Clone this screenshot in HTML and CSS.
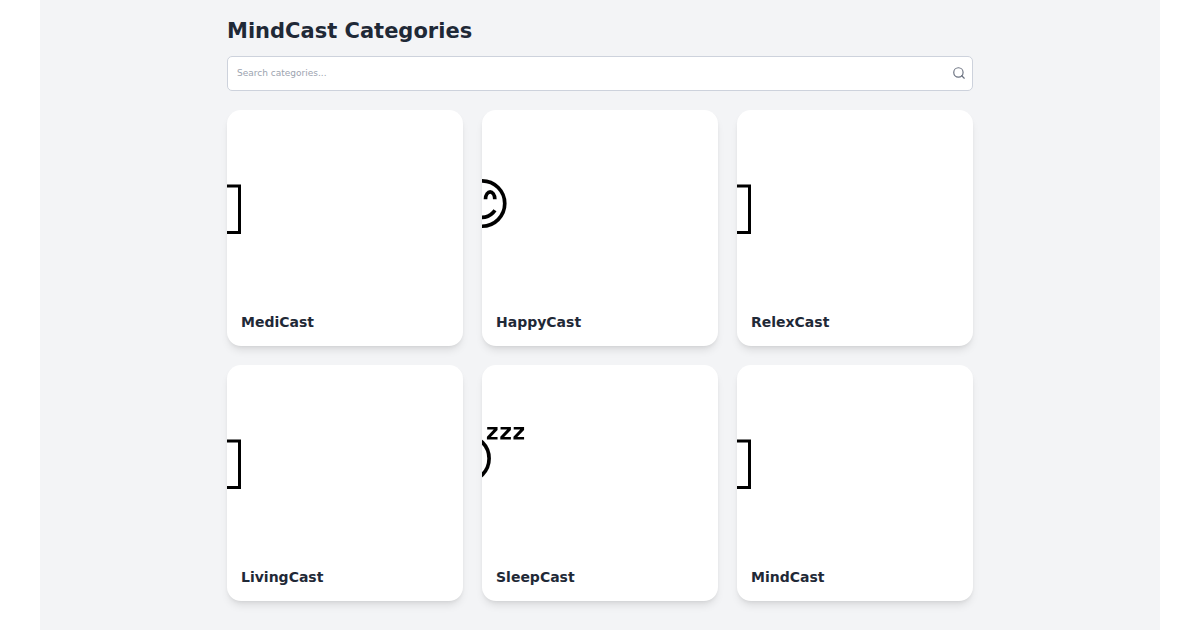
FILE: index.html
```html
<!DOCTYPE html>
<html lang="en">
<head>
<meta charset="utf-8">
<meta name="viewport" content="width=device-width, initial-scale=1">
<title>MindCast Categories</title>
<link rel="stylesheet" href="styles.css">
</head>
<body>
<main class="page">
  <div class="container">
    <h1 class="title">MindCast Categories</h1>
    <form class="search" role="search">
      <input class="search-input" type="text" placeholder="Search categories..." aria-label="Search categories">
      <svg class="search-icon" viewBox="0 0 24 24" fill="none" stroke="currentColor" stroke-width="2" stroke-linecap="round" stroke-linejoin="round" aria-hidden="true"><circle cx="11" cy="11" r="8"/><path d="m21 21-4.3-4.3"/></svg>
    </form>
    <div class="grid">
      <article class="card"><div class="card-art"><svg class="box-glyph" viewBox="0 0 28 58" aria-hidden="true"><rect x="1.5" y="10" width="25" height="46.5"/></svg></div><h2 class="card-name">MediCast</h2></article>
      <article class="card"><div class="card-art"><span>😊</span></div><h2 class="card-name">HappyCast</h2></article>
      <article class="card"><div class="card-art"><svg class="box-glyph" viewBox="0 0 28 58" aria-hidden="true"><rect x="1.5" y="10" width="25" height="46.5"/></svg></div><h2 class="card-name">RelexCast</h2></article>
      <article class="card"><div class="card-art"><svg class="box-glyph" viewBox="0 0 28 58" aria-hidden="true"><rect x="1.5" y="10" width="25" height="46.5"/></svg></div><h2 class="card-name">LivingCast</h2></article>
      <article class="card"><div class="card-art"><span>😴</span></div><h2 class="card-name">SleepCast</h2></article>
      <article class="card"><div class="card-art"><svg class="box-glyph" viewBox="0 0 28 58" aria-hidden="true"><rect x="1.5" y="10" width="25" height="46.5"/></svg></div><h2 class="card-name">MindCast</h2></article>
    </div>
  </div>
</main>
</body>
</html>
```
FILE: styles.css
```css
* { box-sizing: border-box; }

body {
  margin: 0;
  background: #fff;
  font-family: "DejaVu Sans", sans-serif;
}

.page {
  min-height: 100vh;
  margin: 0 40px;
  padding: 19px 19px 28px;
  background: #f3f4f6;
}

.container {
  max-width: 746px;
  margin: 0 auto;
}

.title {
  margin: 0 0 13px;
  font-size: 21px;
  line-height: 24px;
  font-weight: 700;
  color: #1f2937;
}

.search {
  position: relative;
  margin-bottom: 19px;
}

.search-input {
  display: block;
  width: 100%;
  height: 35px;
  padding: 0 28px 2px 9px;
  border: 1px solid #cdd2dc;
  border-radius: 5px;
  background: #fff;
  font-family: inherit;
  font-size: 9px;
  color: #1f2937;
}

.search-input::placeholder { color: #9ca3af; }

.search-icon {
  position: absolute;
  top: 0;
  bottom: 1px;
  right: 7px;
  width: 14px;
  height: 14px;
  margin: auto 0;
  color: #6b7280;
}

.grid {
  display: grid;
  grid-template-columns: repeat(3, minmax(0, 1fr));
  gap: 19px;
}

.card {
  display: flex;
  flex-direction: column;
  aspect-ratio: 1;
  overflow: hidden;
  border-radius: 14px;
  background: #fff;
  box-shadow: 0 6px 9px -2px rgba(0, 0, 0, 0.1), 0 2px 4px -2px rgba(0, 0, 0, 0.1);
}

/* Zero width centres the glyph on the card's left edge. */
.card-art {
  flex: 1;
  display: flex;
  align-items: center;
  justify-content: center;
  width: 0;
  font-size: 56px;
  line-height: 1;
  color: #000;
}

.box-glyph {
  flex: none;
  width: 28px;
  height: 58px;
  fill: none;
  stroke: currentColor;
  stroke-width: 3;
}

.card-name {
  margin: 0;
  padding: 14px;
  font-size: 14px;
  line-height: 19px;
  font-weight: 700;
  color: #1f2937;
}
```
